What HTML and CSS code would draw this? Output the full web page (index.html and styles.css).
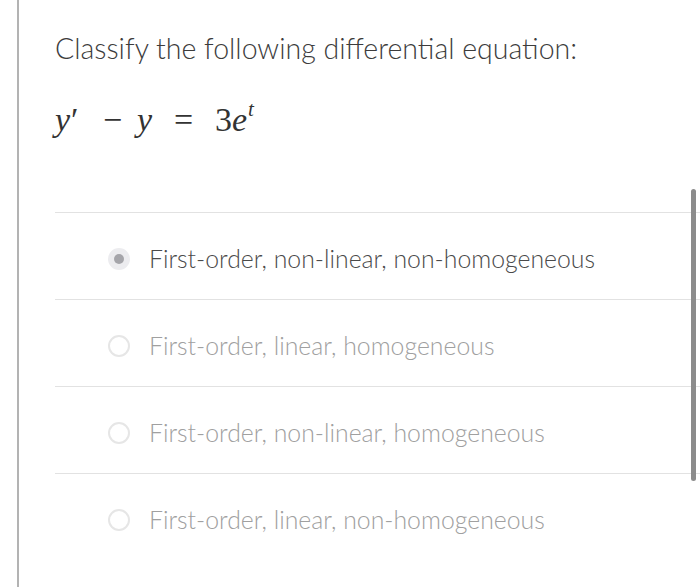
FILE: index.html
```html
<!DOCTYPE html>
<html>
<head>
<meta charset="utf-8">
<link rel="stylesheet" href="styles.css">
</head>
<body>
<div class="page">
  <div class="question">
    <h1 class="title">Classify the following differential equation:</h1>
    <div class="equation">
      <span class="term t1"><span class="v">y</span><span class="prime">′</span></span>
      <span class="term t2">−</span>
      <span class="term t3 v">y</span>
      <span class="term t4">=</span>
      <span class="term t5"><span class="num">3</span><span class="v">e</span><span class="v sup">t</span></span>
    </div>
  </div>
  <ul class="options">
    <li class="option selected"><span class="radio"><span class="dot"></span></span><span class="label">First-order, non-linear, non-homogeneous</span></li>
    <li class="option"><span class="radio"></span><span class="label">First-order, linear, homogeneous</span></li>
    <li class="option"><span class="radio"></span><span class="label">First-order, non-linear, homogeneous</span></li>
    <li class="option"><span class="radio"></span><span class="label">First-order, linear, non-homogeneous</span></li>
  </ul>
  <div class="scrollbar"></div>
</div>
</body>
</html>
```
FILE: styles.css
```css
html, body {
  margin: 0;
  padding: 0;
  background: #ffffff;
}
.page {
  position: relative;
  width: 700px;
  height: 587px;
  box-sizing: border-box;
  margin-left: 17px;
  border-left: 2px solid #b3b3b3;
  padding-left: 36px;
  overflow: hidden;
  font-family: Lato, "Liberation Sans", sans-serif;
}
.question {
  padding-top: 30px;
  height: 212px;
  box-sizing: border-box;
}
.title {
  margin: 0;
  font-weight: 300;
  font-size: 28.5px;
  line-height: 36px;
  color: #3c3c3c;
}
.equation {
  margin-top: 34px;
  font-family: "Liberation Serif", serif;
  font-size: 34px;
  line-height: 40px;
  color: #333333;
  display: flex;
  align-items: baseline;
}
.equation .v { font-style: italic; }
.term { display: inline-block; }
.t1 { width: 48px; }
.t2 { width: 34px; }
.t3 { width: 37px; }
.t4 { width: 41px; }
.equation .prime { margin-left: 1px; }
.equation .sup { font-size: 21px; position: relative; top: -15px; margin-left: 1px; }
.options {
  list-style: none;
  margin: 0;
  padding: 0;
}
.option {
  display: flex;
  align-items: center;
  height: 87px;
  border-top: 1px solid #e2e2e2;
  padding-left: 53px;
  box-sizing: border-box;
  padding-top: 5px;
}
.radio {
  width: 18px;
  height: 18px;
  border-radius: 50%;
  border: 2px solid #e6e6e6;
  display: flex;
  align-items: center;
  justify-content: center;
  flex: none;
  margin-right: 19px;
}
.selected .radio {
  background: #ececef;
  border-color: #ececef;
}
.dot {
  width: 10px;
  height: 10px;
  border-radius: 50%;
  background: #a5a5aa;
}
.label {
  font-size: 24.8px;
  font-weight: 300;
  color: #a0a0a0;
}
.selected .label { color: #4a4a4a; }
.scrollbar {
  position: absolute;
  left: 672px;
  top: 189px;
  width: 5px;
  height: 292px;
  border-radius: 3px;
  background: #8c8c8c;
}
```
